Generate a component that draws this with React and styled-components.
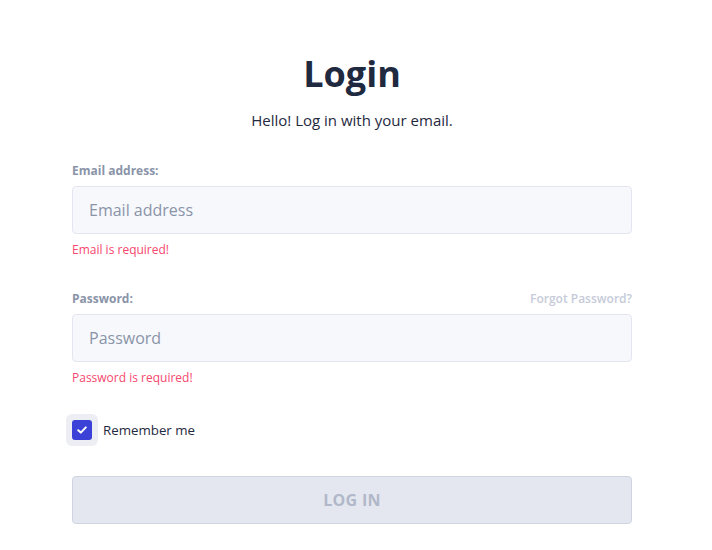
import styled, { createGlobalStyle } from 'styled-components';

const GlobalStyle = createGlobalStyle`
  * { box-sizing: border-box; }
  body {
    margin: 0;
    background: #fff;
    font-family: "Open Sans", "Noto Sans", sans-serif;
  }
`;

const Page = styled.div`
  width: 712px;
  padding: 50px 80px 0 72px;
`;

const Form = styled.form`
  width: 560px;
  display: flex;
  flex-direction: column;
`;

const Title = styled.h1`
  margin: 0;
  text-align: center;
  font-size: 36px;
  line-height: 48px;
  font-weight: 700;
  color: #1f2940;
`;

const Subtitle = styled.p`
  margin: 11px 0 0;
  text-align: center;
  font-size: 15px;
  line-height: 22px;
  color: #1f2940;
`;

const Field = styled.div`
  display: flex;
  flex-direction: column;
  margin-top: ${(p) => p.$top}px;
`;

const LabelRow = styled.div`
  display: flex;
  justify-content: space-between;
  align-items: center;
  height: 18px;
  margin-bottom: 7px;
`;

const Label = styled.label`
  font-size: 12px;
  font-weight: 700;
  color: #8a94a8;
`;

const Forgot = styled.a`
  font-size: 12px;
  font-weight: 600;
  color: #c6cbd9;
  cursor: pointer;
`;

const Input = styled.input`
  height: 48px;
  width: 100%;
  border: 1px solid #e3e6ee;
  border-radius: 4px;
  background: #f7f8fc;
  padding: 0 16px;
  font-family: inherit;
  font-size: 16px;
  color: #1f2940;
  outline: none;
  &::placeholder {
    color: #8a94a8;
  }
`;

const Error = styled.span`
  margin-top: 7px;
  font-size: 12px;
  line-height: 18px;
  color: #f5476d;
`;

const CheckRow = styled.label`
  display: flex;
  align-items: center;
  gap: 5px;
  margin: 27px 0 0 -6px;
  cursor: pointer;
`;

const Halo = styled.span`
  width: 32px;
  height: 32px;
  border-radius: 6px;
  background: #eceef3;
  display: flex;
  align-items: center;
  justify-content: center;
`;

const Box = styled.span`
  width: 20px;
  height: 20px;
  border-radius: 3px;
  background: #3b40d6;
  display: flex;
  align-items: center;
  justify-content: center;
`;

const CheckText = styled.span`
  font-size: 13.3px;
  color: #1f2940;
`;

const Button = styled.button`
  margin-top: 30px;
  height: 48px;
  width: 100%;
  border: 1px solid #cfd4e0;
  border-radius: 4px;
  background: #e4e7ef;
  font-family: inherit;
  font-size: 16px;
  font-weight: 700;
  color: #b1b8c9;
  letter-spacing: 0.3px;
`;

export default function App() {
  return (
    <>
      <GlobalStyle />
      <Page>
        <Form onSubmit={(e) => e.preventDefault()}>
          <Title>Login</Title>
          <Subtitle>Hello! Log in with your email.</Subtitle>

          <Field $top={30}>
            <LabelRow>
              <Label>Email address:</Label>
            </LabelRow>
            <Input placeholder="Email address" />
            <Error>Email is required!</Error>
          </Field>

          <Field $top={30}>
            <LabelRow>
              <Label>Password:</Label>
              <Forgot>Forgot Password?</Forgot>
            </LabelRow>
            <Input type="password" placeholder="Password" />
            <Error>Password is required!</Error>
          </Field>

          <CheckRow>
            <Halo>
              <Box>
                <svg width="10" height="8" viewBox="0 0 10 8">
                  <path d="M1.2 4.2 L3.8 6.6 L8.8 1.4" fill="none" stroke="#fff" strokeWidth="2" strokeLinecap="round" strokeLinejoin="round" />
                </svg>
              </Box>
            </Halo>
            <CheckText>Remember me</CheckText>
          </CheckRow>

          <Button type="submit" disabled>LOG IN</Button>
        </Form>
      </Page>
    </>
  );
}
